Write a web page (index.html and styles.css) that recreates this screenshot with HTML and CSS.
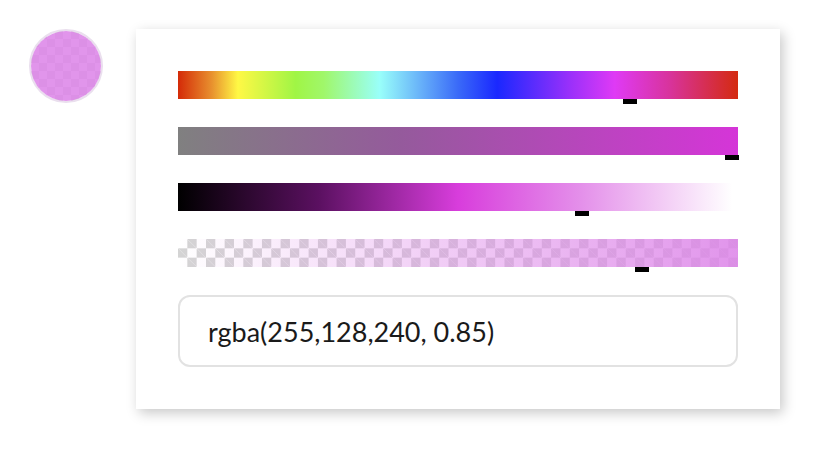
FILE: index.html
```html
<!DOCTYPE html>
<html>
<head>
<meta charset="utf-8">
<link rel="stylesheet" href="styles.css">
</head>
<body>
<div class="page">
  <div class="swatch"><div class="swatch-fill"></div></div>
  <div class="panel">
    <div class="bar hue"><span class="marker" style="left: 445px"></span></div>
    <div class="bar sat"><span class="marker" style="left: 547px"></span></div>
    <div class="bar light"><span class="marker" style="left: 397px"></span></div>
    <div class="bar alpha"><div class="alpha-fill"></div><span class="marker" style="left: 457px"></span></div>
    <div class="field">rgba(255,128,240, 0.85)</div>
  </div>
</div>
</body>
</html>
```
FILE: styles.css
```css
html, body {
  margin: 0;
  padding: 0;
  background: #ffffff;
}
.page {
  display: flex;
  align-items: flex-start;
  gap: 33px;
  padding: 29px 0 40px 29px;
}
.swatch {
  width: 74px;
  height: 74px;
  border-radius: 50%;
  box-sizing: border-box;
  border: 2px solid #eadfee;
  overflow: hidden;
  background-color: #ffffff;
  background-image:
    linear-gradient(45deg, #dcdcdc 25%, transparent 25%, transparent 75%, #dcdcdc 75%),
    linear-gradient(45deg, #dcdcdc 25%, transparent 25%, transparent 75%, #dcdcdc 75%);
  background-size: 16px 16px;
  background-position: 0 0, 8px 8px;
}
.swatch-fill {
  width: 100%;
  height: 100%;
  background: rgba(220, 130, 232, 0.85);
}
.panel {
  width: 644px;
  box-sizing: border-box;
  padding: 42px;
  background: #ffffff;
  box-shadow: 3px 4px 12px rgba(0, 0, 0, 0.22);
  display: flex;
  flex-direction: column;
  gap: 28px;
}
.bar {
  position: relative;
  width: 560px;
  height: 28px;
}
.hue {
  background: linear-gradient(to right,
    #d42a08 0%,
    #e8902e 6%,
    #fff845 10.7%,
    #a0f545 21%,
    #a0f76a 26%,
    #99fffa 36%,
    #3a6af8 50%,
    #1a28ff 57%,
    #9a30fa 70%,
    #df3af5 78%,
    #d8339a 88%,
    #d42a10 100%);
}
.sat {
  background: linear-gradient(to right, #808080 0%, #955a9c 40%, #d535d8 100%);
}
.light {
  background: linear-gradient(to right, #000000 0%, #5a1060 25%, #d83ddc 50%, #e490ea 72%, #ffffff 99%);
}
.alpha {
  background-color: #ffffff;
  background-image:
    linear-gradient(45deg, #d4d4d4 25%, transparent 25%, transparent 75%, #d4d4d4 75%),
    linear-gradient(45deg, #d4d4d4 25%, transparent 25%, transparent 75%, #d4d4d4 75%);
  background-size: 18.67px 18.67px;
  background-position: 0 0, 9.33px 9.33px;
}
.alpha-fill {
  width: 100%;
  height: 100%;
  background: linear-gradient(to right, rgba(220, 130, 232, 0) 0%, rgba(220, 130, 232, 0.85) 100%);
}
.marker {
  position: absolute;
  top: 100%;
  width: 14px;
  height: 5px;
  background: #000000;
}
.field {
  height: 72px;
  box-sizing: border-box;
  border: 2px solid #e2e2e2;
  border-radius: 12px;
  padding: 0 28px;
  display: flex;
  align-items: center;
  font-family: "Lato", "Open Sans", sans-serif;
  font-size: 27px;
  color: #1a1a1a;
}
```
